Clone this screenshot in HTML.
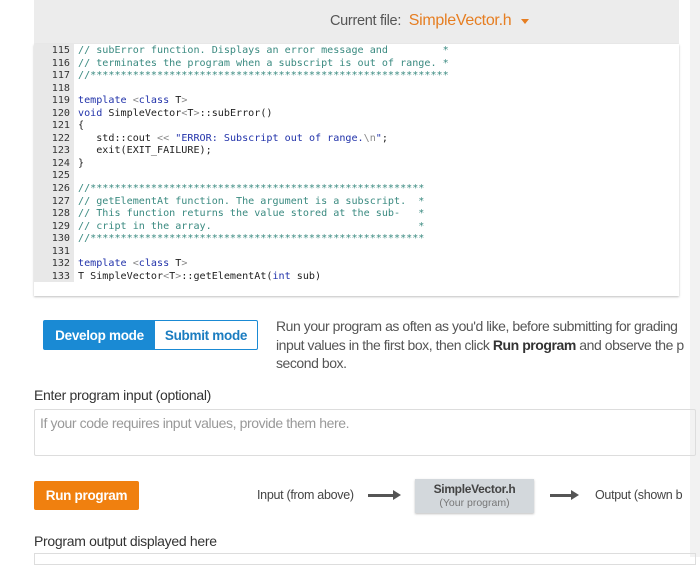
<!DOCTYPE html>
<html><head><style>
body{margin:0;width:700px;height:557px;background:#fff;position:relative;overflow:hidden;font-family:"Liberation Sans",sans-serif;}
.strip{position:absolute;left:690px;top:0;width:10px;height:557px;background:#f2f2f2;}
.hdr{position:absolute;left:34px;top:0;width:645px;height:44px;background:#ececec;}
.hdr .t{position:absolute;left:296px;top:12px;font-size:14.5px;color:#555;letter-spacing:-0.3px;}
.hdr .f{color:#e67e22;font-size:16px;margin-left:4px;}
.hdr .arr{display:inline-block;margin-left:10px;border-left:4px solid transparent;border-right:4px solid transparent;border-top:5px solid #e67e22;vertical-align:middle;}
.code{position:absolute;left:34px;top:44px;width:645px;height:252px;background:#fff;box-shadow:0 1px 2px rgba(0,0,0,.25);}
.gut{position:absolute;left:0;top:0;width:40px;height:238px;background:#e8e8e8;}
pre{position:absolute;left:0;top:1px;margin:0;font-family:"DejaVu Sans Mono","Liberation Mono",monospace;font-size:10.1px;line-height:12.55px;color:#222;}
.n{display:inline-block;width:36px;text-align:right;color:#333;margin-right:8px;}
.c{color:#3a8a80;}.k{color:#2233aa;}.s{color:#2233aa;}.g{color:#888;}
.btns{position:absolute;left:43px;top:320px;height:30px;width:215px;border:1px solid #1a8ad4;border-radius:2px;box-sizing:border-box;display:flex;}
.btns div{display:flex;align-items:center;justify-content:center;font-weight:bold;font-size:13.5px;letter-spacing:-0.3px;}
.dev{background:#1a8ad4;color:#fff;width:111px;}.sub{color:#1a7cc0;flex:1;}
.desc{position:absolute;left:276px;top:317px;font-size:14px;line-height:18.5px;color:#555;white-space:nowrap;letter-spacing:-0.45px;}
.lbl{position:absolute;left:34px;font-size:14px;color:#333;letter-spacing:-0.3px;}
.inp{position:absolute;left:34px;top:409px;width:660px;height:45px;border:1px solid #ddd;border-radius:2px;}
.inp span{position:absolute;left:5px;top:5px;font-size:14px;color:#999;letter-spacing:-0.4px;}
.run{position:absolute;left:34px;top:481px;width:105px;height:29px;background:#f0800f;color:#fff;font-weight:bold;font-size:13.5px;letter-spacing:-0.3px;display:flex;align-items:center;justify-content:center;border-radius:2px;}
.sm{position:absolute;font-size:12.5px;color:#444;letter-spacing:-0.3px;}
.box{position:absolute;left:415px;top:479px;width:119px;height:34px;background:#d3d8dc;box-shadow:0 1px 2px rgba(0,0,0,.25);text-align:center;}
.ar{position:absolute;height:3px;background:#555;}
.ah{position:absolute;border-top:5px solid transparent;border-bottom:5px solid transparent;border-left:8px solid #555;}
.out{position:absolute;left:34px;top:553px;width:660px;height:10px;border:1px solid #ddd;}
</style></head><body>
<div class="strip"></div>
<div class="hdr"><div class="t">Current file: <span class="f">SimpleVector.h</span><span class="arr"></span></div></div>
<div class="code"><div class="gut"></div>
<pre><span class="n">115</span><span class="c">// subError function. Displays an error message and         *</span>
<span class="n">116</span><span class="c">// terminates the program when a subscript is out of range. *</span>
<span class="n">117</span><span class="c">//***********************************************************</span>
<span class="n">118</span>
<span class="n">119</span><span class="k">template</span> <span class="g">&lt;</span><span class="k">class</span> T<span class="g">&gt;</span>
<span class="n">120</span><span class="k">void</span> SimpleVector<span class="g">&lt;</span>T<span class="g">&gt;</span>::subError()
<span class="n">121</span>{
<span class="n">122</span>   std::cout <span class="g">&lt;&lt;</span> <span class="s">"ERROR: Subscript out of range.<span class="g">\n</span>"</span>;
<span class="n">123</span>   exit(EXIT_FAILURE);
<span class="n">124</span>}
<span class="n">125</span>
<span class="n">126</span><span class="c">//*******************************************************</span>
<span class="n">127</span><span class="c">// getElementAt function. The argument is a subscript.  *</span>
<span class="n">128</span><span class="c">// This function returns the value stored at the sub-   *</span>
<span class="n">129</span><span class="c">// cript in the array.                                  *</span>
<span class="n">130</span><span class="c">//*******************************************************</span>
<span class="n">131</span>
<span class="n">132</span><span class="k">template</span> <span class="g">&lt;</span><span class="k">class</span> T<span class="g">&gt;</span>
<span class="n">133</span>T SimpleVector<span class="g">&lt;</span>T<span class="g">&gt;</span>::getElementAt(<span class="k">int</span> sub)</pre></div>
<div class="btns"><div class="dev">Develop mode</div><div class="sub">Submit mode</div></div>
<div class="desc">Run your program as often as you'd like, before submitting for grading<br>input values in the first box, then click <b style="color:#333">Run program</b> and observe the p<br>second box.</div>
<div class="lbl" style="top:387px">Enter program input (optional)</div>
<div class="inp"><span>If your code requires input values, provide them here.</span></div>
<div class="run">Run program</div>
<div class="sm" style="left:257px;top:488px">Input (from above)</div>
<div class="ar" style="left:368px;top:494px;width:26px"></div><div class="ah" style="left:393px;top:490px"></div>
<div class="box"><div style="font-size:12px;font-weight:bold;color:#444;margin-top:3px;letter-spacing:-0.3px">SimpleVector.h</div><div style="font-size:10.5px;color:#777;margin-top:1px">(Your program)</div></div>
<div class="ar" style="left:550px;top:494px;width:22px"></div><div class="ah" style="left:571px;top:490px"></div>
<div class="sm" style="left:595px;top:488px;white-space:nowrap">Output (shown b</div>
<div class="lbl" style="top:533px">Program output displayed here</div>
<div class="out"></div>
</body></html>
